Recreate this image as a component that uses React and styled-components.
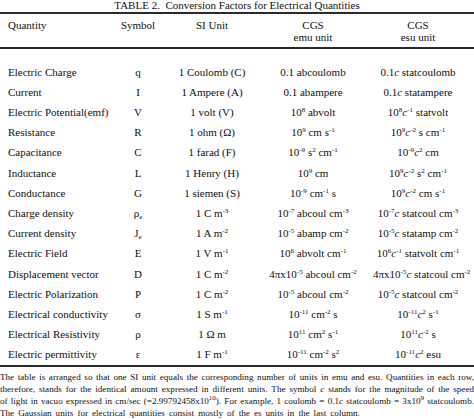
import React from "react";
import styled, { createGlobalStyle } from "styled-components";

const INK = "#111";

const Global = createGlobalStyle`
  html, body { margin: 0; padding: 0; background: #fff; }
  body { font-family: "Liberation Serif", "Times New Roman", serif; color: ${INK}; }
`;

const Page = styled.div`
  width: 474px;
  height: 419px;
  overflow: hidden;
  background: #fff;
`;

const Title = styled.div`
  text-align: center;
  font-size: 11px;
  line-height: 11px;
  height: 12px;
  white-space: pre;
`;

const Rule = styled.div`
  height: 2px;
  background: #2a2a2a;
`;

const cols = "105px 66px 82px 120px 90px";

const Row = styled.div`
  display: grid;
  grid-template-columns: ${cols};
  align-items: center;
  height: 20.2px;
  font-size: 11px;
  white-space: nowrap;
`;

const HeadRow = styled(Row)`
  height: auto;
  align-items: start;
  padding: 5px 0 4px;
  line-height: 12px;
`;

const Cell = styled.div`
  text-align: ${(p) => (p.$left ? "left" : "center")};
  padding-left: ${(p) => (p.$left ? "8px" : "0")};
`;

const Body = styled.div`
  padding-top: 12.6px;
  padding-bottom: 1px;
`;

const Sup = styled.sup`
  font-size: 7px;
  vertical-align: 4px;
  line-height: 0;
`;

const Sub = styled.sub`
  font-size: 7px;
  vertical-align: -2px;
  line-height: 0;
`;

const Notes = styled.div`
  margin-top: 5px;
  font-size: 9.1px;
  line-height: 11.7px;
`;

const NoteLine = styled.div`
  text-align: ${(p) => (p.$last ? "left" : "justify")};
  text-align-last: ${(p) => (p.$last ? "left" : "justify")};
  word-spacing: ${(p) => (p.$last ? "1.8px" : "0")};
  white-space: ${(p) => (p.$last ? "nowrap" : "normal")};
`;

const C = () => <i>c</i>;
const p = (n) => <Sup>{n}</Sup>;

const rows = [
  ["Electric Charge", "q", "1 Coulomb (C)", <>0.1 abcoulomb</>, <>0.1<C /> statcoulomb</>],
  ["Current", "I", "1 Ampere (A)", <>0.1 abampere</>, <>0.1<C /> statampere</>],
  ["Electric Potential(emf)", "V", "1 volt (V)", <>10{p(8)} abvolt</>, <>10{p(8)}<C />{p("-1")} statvolt</>],
  ["Resistance", "R", "1 ohm (\u03a9)", <>10{p(9)} cm s{p("-1")}</>, <>10{p(9)}<C />{p("-2")} s cm{p("-1")}</>],
  ["Capacitance", "C", "1 farad (F)", <>10{p("-9")} s{p(2)} cm{p("-1")}</>, <>10{p("-9")}<C />{p(2)} cm</>],
  ["Inductance", "L", "1 Henry (H)", <>10{p(9)} cm</>, <>10{p(9)}<C />{p("-2")} s{p(2)} cm{p("-1")}</>],
  ["Conductance", "G", "1 siemen (S)", <>10{p("-9")} cm{p("-1")} s</>, <>10{p(9)}<C />{p("-2")} cm s{p("-1")}</>],
  ["Charge density", <>ρ<Sub>e</Sub></>, <>1 C m{p("-3")}</>, <>10{p("-7")} abcoul cm{p("-3")}</>, <>10{p("-7")}<C /> statcoul cm{p("-3")}</>],
  ["Current density", <>J<Sub>e</Sub></>, <>1 A m{p("-2")}</>, <>10{p("-5")} abamp cm{p("-2")}</>, <>10{p("-5")}<C /> statamp cm{p("-2")}</>],
  ["Electric Field", "E", <>1 V m{p("-1")}</>, <>10{p(6)} abvolt cm{p("-1")}</>, <>10{p(6)}<C />{p("-1")} statvolt cm{p("-1")}</>],
  ["Displacement vector", "D", <>1 C m{p("-2")}</>, <>4πx10{p("-5")} abcoul cm{p("-2")}</>, <>4πx10{p("-5")}<C /> statcoul cm{p("-2")}</>],
  ["Electric Polarization", "P", <>1 C m{p("-2")}</>, <>10{p("-5")} abcoul cm{p("-2")}</>, <>10{p("-5")}<C /> statcoul cm{p("-2")}</>],
  ["Electrical conductivity", "σ", <>1 S m{p("-1")}</>, <>10{p("-11")} cm{p("-2")} s</>, <>10{p("-11")}<C />{p(2)} s{p("-1")}</>],
  ["Electrical Resistivity", "ρ", "1 \u03a9 m", <>10{p(11)} cm{p(2)} s{p("-1")}</>, <>10{p(11)}<C />{p("-2")} s</>],
  ["Electric permittivity", "ε", <>1 F m{p("-1")}</>, <>10{p("-11")} cm{p("-2")} s{p(2)}</>, <>10{p("-11")}<C />{p(2)} esu</>],
];

export default function App() {
  return (
    <Page>
      <Global />
      <Title>TABLE 2.  Conversion Factors for Electrical Quantities</Title>
      <Rule />
      <HeadRow>
        <Cell $left>Quantity</Cell>
        <Cell>Symbol</Cell>
        <Cell>SI Unit</Cell>
        <Cell>CGS<br />emu unit</Cell>
        <Cell>CGS<br />esu unit</Cell>
      </HeadRow>
      <Rule />
      <Body>
        {rows.map((r, i) => (
          <Row key={i}>
            <Cell $left>{r[0]}</Cell>
            <Cell>{r[1]}</Cell>
            <Cell>{r[2]}</Cell>
            <Cell>{r[3]}</Cell>
            <Cell>{r[4]}</Cell>
          </Row>
        ))}
      </Body>
      <Rule />
      <Notes>
        <NoteLine>The table is arranged so that one SI unit equals the corresponding number of units in emu and esu. Quantities in each row,</NoteLine>
        <NoteLine>therefore, stands for the identical amount expressed in different units. The symbol <C /> stands for the magnitude of the speed</NoteLine>
        <NoteLine>of light in vacuo expressed in cm/sec (=2.99792458x10{p(10)}). For example, 1 coulomb = 0.1<C /> statcoulomb = 3x10{p(9)} statcoulomb.</NoteLine>
        <NoteLine $last>The Gaussian units for electrical quantities consist mostly of the es units in the last column.</NoteLine>
      </Notes>
    </Page>
  );
}
